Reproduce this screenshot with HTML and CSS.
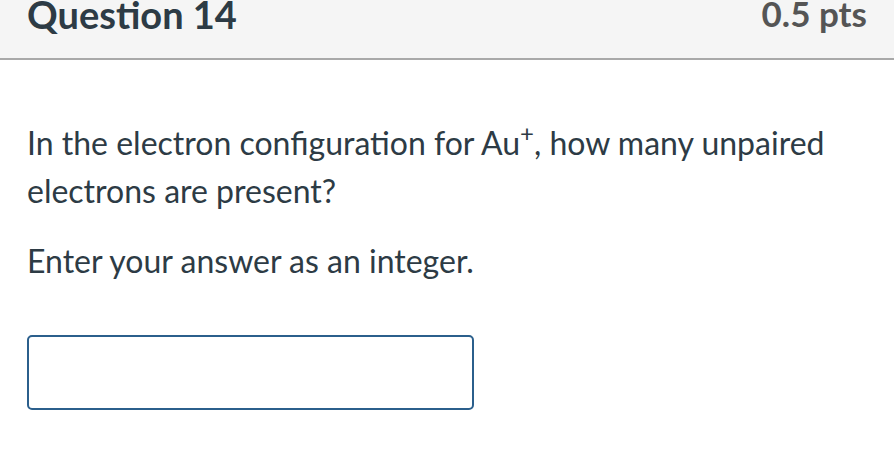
FILE: index.html
```html
<!DOCTYPE html>
<html>
<head>
<meta charset="utf-8">
<link rel="stylesheet" href="styles.css">
</head>
<body>
<div class="question">
  <div class="header">
    <span class="title">Question 14</span>
    <span class="pts">0.5 pts</span>
  </div>
  <div class="content">
    <p class="text">In the electron configuration for Au<sup>+</sup>, how many unpaired electrons are present?</p>
    <p class="text second">Enter your answer as an integer.</p>
    <input class="answer" type="text">
  </div>
</div>
</body>
</html>
```
FILE: styles.css
```css
html, body {
  margin: 0;
  padding: 0;
  background: #ffffff;
}
body {
  font-family: Lato, "Open Sans", sans-serif;
  color: #2d3b45;
  width: 894px;
  height: 452px;
  overflow: hidden;
}
.header {
  display: flex;
  justify-content: space-between;
  align-items: flex-start;
  height: 58px;
  background: #f5f5f5;
  border-bottom: 2px solid #a9a9a9;
  padding: 0 27px;
  box-sizing: content-box;
}
.title {
  font-weight: 700;
  font-size: 38px;
  line-height: 38px;
  margin-top: -5px;
  color: #2d3b45;
}
.pts {
  font-weight: 700;
  font-size: 35px;
  line-height: 35px;
  margin-top: -4px;
  color: #555555;
}
.content {
  padding: 0 27px;
}
.text {
  margin: 0;
  font-size: 32px;
  line-height: 48px;
  padding-top: 59px;
  width: 830px;
}
.text sup {
  font-size: 24px;
  line-height: 0;
  vertical-align: 13px;
}
.text.second {
  padding-top: 22px;
}
.answer {
  display: block;
  margin-top: 50px;
  width: 447px;
  height: 75px;
  box-sizing: border-box;
  border: 2px solid #2b5f8c;
  border-radius: 5px;
  background: #fff;
  outline: none;
}
```
